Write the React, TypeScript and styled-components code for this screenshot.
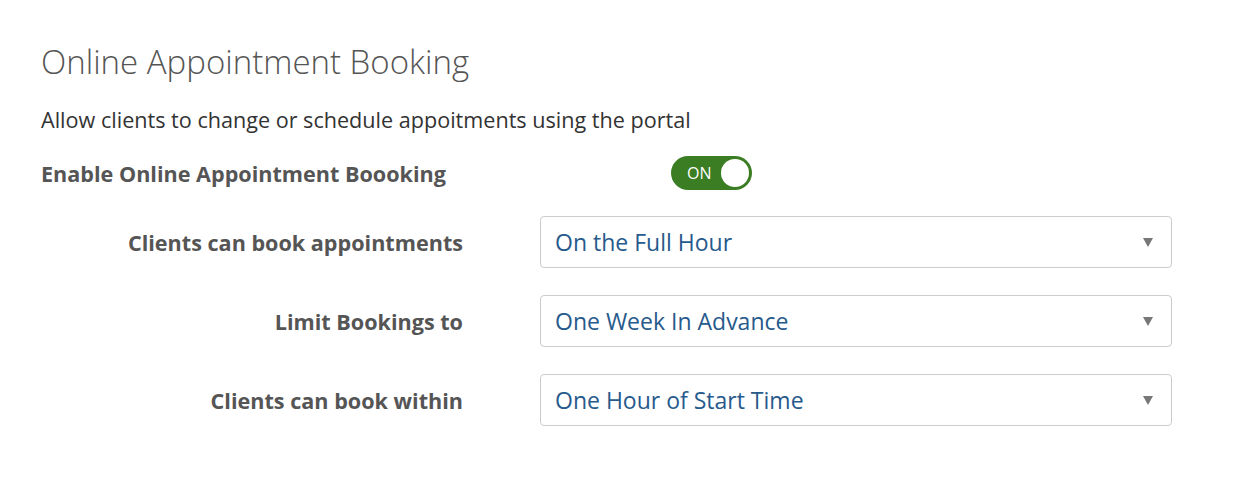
import React from 'react';
import styled, { createGlobalStyle } from 'styled-components';

const GlobalStyle = createGlobalStyle`
  body {
    margin: 0;
    background: #fff;
    font-family: 'Open Sans', 'Liberation Sans', sans-serif;
  }
`;

const Page = styled.div`
  padding: 40px 41px 0;
`;

const Title = styled.h1`
  margin: 0;
  font-size: 33px;
  font-weight: 300;
  line-height: 44px;
  color: #555;
`;

const Description = styled.p`
  margin: 22px 0 0;
  font-size: 21.6px;
  line-height: 28px;
  color: #333;
`;

const ToggleRow = styled.div`
  display: flex;
  align-items: center;
  margin-top: 22px;
`;

const ToggleLabel = styled.div`
  width: 630px;
  font-size: 21.6px;
  font-weight: 700;
  color: #555;
`;

const Switch = styled.button<{ $on: boolean }>`
  position: relative;
  width: 81px;
  height: 34px;
  border: none;
  border-radius: 17px;
  padding: 0 0 0 16px;
  display: flex;
  align-items: center;
  background: ${({ $on }) => ($on ? '#3b7d23' : '#bbb')};
  color: #fff;
  font-family: inherit;
  font-size: 16px;
  cursor: pointer;
`;

const Knob = styled.span`
  position: absolute;
  top: 3px;
  right: 3px;
  width: 28px;
  height: 28px;
  border-radius: 50%;
  background: #fff;
`;

const Form = styled.div`
  display: grid;
  grid-template-columns: 422px 632px;
  column-gap: 77px;
  row-gap: 27px;
  align-items: center;
  margin-top: 26px;
`;

const FieldLabel = styled.label`
  text-align: right;
  font-size: 21.6px;
  font-weight: 700;
  color: #555;
`;

const Select = styled.div`
  height: 52px;
  box-sizing: border-box;
  border: 1px solid #ccc;
  border-radius: 4px;
  padding: 0 18px 0 14px;
  display: flex;
  align-items: center;
  justify-content: space-between;
  font-size: 23px;
  color: #275a8c;
`;

const Caret = styled.span`
  width: 0;
  height: 0;
  border-left: 5px solid transparent;
  border-right: 5px solid transparent;
  border-top: 9px solid #777;
`;

const fields = [
  { label: 'Clients can book appointments', value: 'On the Full Hour' },
  { label: 'Limit Bookings to', value: 'One Week In Advance' },
  { label: 'Clients can book within', value: 'One Hour of Start Time' },
];

export default function App() {
  return (
    <>
      <GlobalStyle />
      <Page>
        <Title>Online Appointment Booking</Title>
        <Description>Allow clients to change or schedule appoitments using the portal</Description>
        <ToggleRow>
          <ToggleLabel>Enable Online Appointment Boooking</ToggleLabel>
          <Switch $on>
            ON
            <Knob />
          </Switch>
        </ToggleRow>
        <Form>
          {fields.map((f) => (
            <React.Fragment key={f.label}>
              <FieldLabel>{f.label}</FieldLabel>
              <Select>
                {f.value}
                <Caret />
              </Select>
            </React.Fragment>
          ))}
        </Form>
      </Page>
    </>
  );
}
